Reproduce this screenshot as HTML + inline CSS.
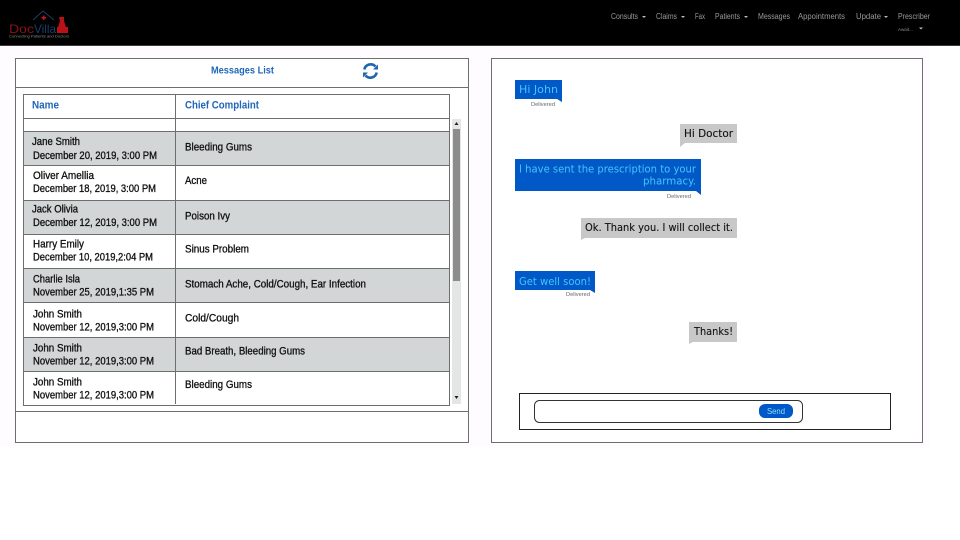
<!DOCTYPE html>
<html><head><meta charset="utf-8"><style>
html,body{margin:0;padding:0;background:#fff;width:960px;height:540px;overflow:hidden}
svg{display:block}
text{font-family:"Liberation Sans",sans-serif}
.n{fill:#9a9a9a;font-size:8px}
.t{fill:#111;font-size:11px;stroke:#111;stroke-width:.32px}
.h{fill:#1f66b8;font-size:11px;font-weight:bold}
.c{font-family:"DejaVu Sans",sans-serif;font-size:10.800px}
.w{fill:#45c4ff}.k{fill:#111;stroke:#111;stroke-width:.12px}
.d{fill:#666;font-size:5.500px}
.l{stroke:#6e6e6e;stroke-width:1;fill:none}
</style></head><body>
<svg width="960" height="540" viewBox="0 0 960 540" xmlns="http://www.w3.org/2000/svg">
<rect width="960" height="540" fill="#fff"/>
<rect x="0" y="46" width="930" height="400" fill="#fffcff"/>
<rect width="960" height="45" fill="#000"/><rect y="45" width="960" height="1" fill="#3a3a3a"/>

<!-- logo -->
<path d="M33 20 L43 11 L54 20" fill="none" stroke="#1c3f66" stroke-width="1"/>
<path d="M41.500 17h1.500v-1.500h1.500v1.500h1.500v1.500h-1.500v1.500h-1.500v-1.500h-1.500z" fill="#c8141c"/>
<text x="9" y="33" textLength="25" lengthAdjust="spacingAndGlyphs" style="font-size:12px;fill:#8c1218">Doc</text>
<text x="34" y="33" textLength="22" lengthAdjust="spacingAndGlyphs" style="font-size:12px;fill:#183f6c">Villa</text>
<path d="M59 17h5v4l1 3 1 3h2v6h-11v-6h1l1-3 1-3z" fill="#b81218"/>
<text x="9" y="37.500" textLength="60" lengthAdjust="spacingAndGlyphs" style="font-size:4px;fill:#888">Connecting Patients and Doctors</text>

<!-- nav -->
<g>
<text x="611" y="19" textLength="27" lengthAdjust="spacingAndGlyphs" class="n">Consults</text>
<text x="656" y="19" textLength="21" lengthAdjust="spacingAndGlyphs" class="n">Claims</text>
<text x="695" y="19" textLength="10" lengthAdjust="spacingAndGlyphs" class="n">Fax</text>
<text x="715" y="19" textLength="25" lengthAdjust="spacingAndGlyphs" class="n">Patients</text>
<text x="758" y="19" textLength="32" lengthAdjust="spacingAndGlyphs" class="n">Messages</text>
<text x="798" y="19" textLength="47" lengthAdjust="spacingAndGlyphs" class="n">Appointments</text>
<text x="856" y="19" textLength="25" lengthAdjust="spacingAndGlyphs" class="n">Update</text>
<text x="898" y="19" textLength="32" lengthAdjust="spacingAndGlyphs" class="n">Prescriber</text>
<text x="898" y="31" textLength="15" lengthAdjust="spacingAndGlyphs" style="font-size:4.500px;fill:#888">Await...</text>
</g>
<g fill="#bbb">
<path d="M642 16h4l-2 2z"/><path d="M681 16h4l-2 2z"/><path d="M744 16h4l-2 2z"/><path d="M884 16h4l-2 2z"/><path d="M919 27.500h4l-2 2z"/>
</g>

<!-- left panel -->
<rect x="15.500" y="58.500" width="453" height="384" class="l" style="fill:#fff"/>
<line x1="15" y1="87.500" x2="468" y2="87.500" class="l"/>
<line x1="15" y1="411.500" x2="468" y2="411.500" class="l"/>
<text x="211" y="73.500" textLength="63" lengthAdjust="spacingAndGlyphs" class="h" style="font-size:10.500px">Messages List</text>

<!-- refresh -->
<g fill="none" stroke="#1f66b0" stroke-width="2.600">
<path d="M364.300 69.500 A6.500 6.500 0 0 1 375.500 66.500"/><path d="M376.700 72.500 A6.500 6.500 0 0 1 365.500 75.500"/>
</g>
<path d="M378 64.500v5h-5z" fill="#1f66b0"/><path d="M363 77.500v-5h5z" fill="#1f66b0"/>

<!-- table -->
<rect x="24" y="132" width="426" height="33" fill="#d2d6d6"/>
<rect x="24" y="201" width="426" height="33" fill="#d2d6d6"/>
<rect x="24" y="269" width="426" height="33" fill="#d2d6d6"/>
<rect x="24" y="338" width="426" height="33" fill="#d2d6d6"/>
<rect x="23.500" y="94.500" width="426" height="311" class="l"/>
<line x1="175.500" y1="94" x2="175.500" y2="404" class="l"/>
<g class="l">
<line x1="23" y1="118.500" x2="450" y2="118.500"/><line x1="23" y1="131.500" x2="450" y2="131.500"/>
<line x1="23" y1="165.500" x2="450" y2="165.500"/><line x1="23" y1="200.500" x2="450" y2="200.500"/>
<line x1="23" y1="234.500" x2="450" y2="234.500"/><line x1="23" y1="268.500" x2="450" y2="268.500"/>
<line x1="23" y1="302.500" x2="450" y2="302.500"/><line x1="23" y1="337.500" x2="450" y2="337.500"/>
<line x1="23" y1="371.500" x2="450" y2="371.500"/>
</g>
<text x="32" y="108.500" textLength="27" lengthAdjust="spacingAndGlyphs" class="h">Name</text>
<text x="185" y="108.500" textLength="74" lengthAdjust="spacingAndGlyphs" class="h">Chief Complaint</text>

<text x="32" y="145" textLength="48" lengthAdjust="spacingAndGlyphs" class="t">Jane Smith</text>
<text x="33" y="159" textLength="124" lengthAdjust="spacingAndGlyphs" class="t">December 20, 2019, 3:00 PM</text>
<text x="185" y="150.500" textLength="67" lengthAdjust="spacingAndGlyphs" class="t">Bleeding Gums</text>

<text x="33" y="179" textLength="61" lengthAdjust="spacingAndGlyphs" class="t">Oliver Amellia</text>
<text x="33" y="192" textLength="123" lengthAdjust="spacingAndGlyphs" class="t">December 18, 2019, 3:00 PM</text>
<text x="185" y="184" textLength="22" lengthAdjust="spacingAndGlyphs" class="t">Acne</text>

<text x="32" y="212.500" textLength="46" lengthAdjust="spacingAndGlyphs" class="t">Jack Olivia</text>
<text x="33" y="226" textLength="124" lengthAdjust="spacingAndGlyphs" class="t">December 12, 2019, 3:00 PM</text>
<text x="185" y="219.500" textLength="45" lengthAdjust="spacingAndGlyphs" class="t">Poison Ivy</text>

<text x="33" y="247.500" textLength="51" lengthAdjust="spacingAndGlyphs" class="t">Harry Emily</text>
<text x="33" y="260.500" textLength="120" lengthAdjust="spacingAndGlyphs" class="t">December 10, 2019,2:04 PM</text>
<text x="185" y="252.500" textLength="64" lengthAdjust="spacingAndGlyphs" class="t">Sinus Problem</text>

<text x="33" y="282.500" textLength="47" lengthAdjust="spacingAndGlyphs" class="t">Charlie Isla</text>
<text x="33" y="295.500" textLength="121" lengthAdjust="spacingAndGlyphs" class="t">November 25, 2019,1:35 PM</text>
<text x="185" y="287.500" textLength="181" lengthAdjust="spacingAndGlyphs" class="t">Stomach Ache, Cold/Cough, Ear Infection</text>

<text x="33" y="317.500" textLength="49" lengthAdjust="spacingAndGlyphs" class="t">John Smith</text>
<text x="33" y="330.500" textLength="121" lengthAdjust="spacingAndGlyphs" class="t">November 12, 2019,3:00 PM</text>
<text x="185" y="321.500" textLength="54" lengthAdjust="spacingAndGlyphs" class="t">Cold/Cough</text>

<text x="33" y="351.500" textLength="49" lengthAdjust="spacingAndGlyphs" class="t">John Smith</text>
<text x="33" y="364.500" textLength="121" lengthAdjust="spacingAndGlyphs" class="t">November 12, 2019,3:00 PM</text>
<text x="185" y="354.500" textLength="120" lengthAdjust="spacingAndGlyphs" class="t">Bad Breath, Bleeding Gums</text>

<text x="33" y="385.500" textLength="49" lengthAdjust="spacingAndGlyphs" class="t">John Smith</text>
<text x="33" y="398.500" textLength="121" lengthAdjust="spacingAndGlyphs" class="t">November 12, 2019,3:00 PM</text>
<text x="185" y="388" textLength="67" lengthAdjust="spacingAndGlyphs" class="t">Bleeding Gums</text>

<!-- scrollbar -->
<rect x="452" y="119" width="9" height="285" fill="#e4e6e6"/>
<rect x="453" y="129" width="7" height="152" fill="#8c8c8c"/>
<path d="M454.500 125h4l-2-3z" fill="#222"/><path d="M454.500 396h4l-2 3z" fill="#222"/>

<!-- right panel -->
<rect x="491.500" y="58.500" width="431" height="384" class="l" style="fill:#fff"/>

<path d="M515 80h47v22l-5-3h-42z" fill="#0059c6"/>
<text x="519" y="93" textLength="39" lengthAdjust="spacingAndGlyphs" class="c w">Hi John</text>
<text x="531" y="106" textLength="24" lengthAdjust="spacingAndGlyphs" class="d">Delivered</text>

<path d="M680 124h57v19h-52l-5 4z" fill="#c8c8c8"/>
<text x="684" y="137" textLength="49" lengthAdjust="spacingAndGlyphs" class="c k">Hi Doctor</text>

<path d="M515 159h186v36l-5-4h-181z" fill="#0059c6"/>
<text x="519" y="172.500" textLength="177" lengthAdjust="spacingAndGlyphs" class="c w">I have sent the prescription to your</text>
<text x="643" y="184.500" textLength="53" lengthAdjust="spacingAndGlyphs" class="c w">pharmacy.</text>
<text x="667" y="198" textLength="24" lengthAdjust="spacingAndGlyphs" class="d">Delivered</text>

<path d="M581 218h156v20h-152l-4 2z" fill="#c8c8c8"/>
<text x="585" y="231" textLength="148" lengthAdjust="spacingAndGlyphs" class="c k">Ok. Thank you. I will collect it.</text>

<path d="M515 271h80v22l-5-3h-75z" fill="#0059c6"/>
<text x="519" y="285" textLength="72" lengthAdjust="spacingAndGlyphs" class="c w">Get well soon!</text>
<text x="566" y="296" textLength="24" lengthAdjust="spacingAndGlyphs" class="d">Delivered</text>

<path d="M689 322h48v20h-44l-4 2z" fill="#c8c8c8"/>
<text x="694" y="335" textLength="39" lengthAdjust="spacingAndGlyphs" class="c k">Thanks!</text>

<!-- input -->
<rect x="519.500" y="393.500" width="371" height="36" fill="#fff" stroke="#222"/>
<rect x="534.500" y="400.500" width="268" height="22" rx="5" fill="#fff" stroke="#333"/>
<rect x="759" y="404" width="34" height="14" rx="6" fill="#0059c6"/>
<text x="767" y="414" textLength="18" lengthAdjust="spacingAndGlyphs" style="font-size:8.500px;fill:#8fdcff">Send</text>
</svg>
</body></html>
